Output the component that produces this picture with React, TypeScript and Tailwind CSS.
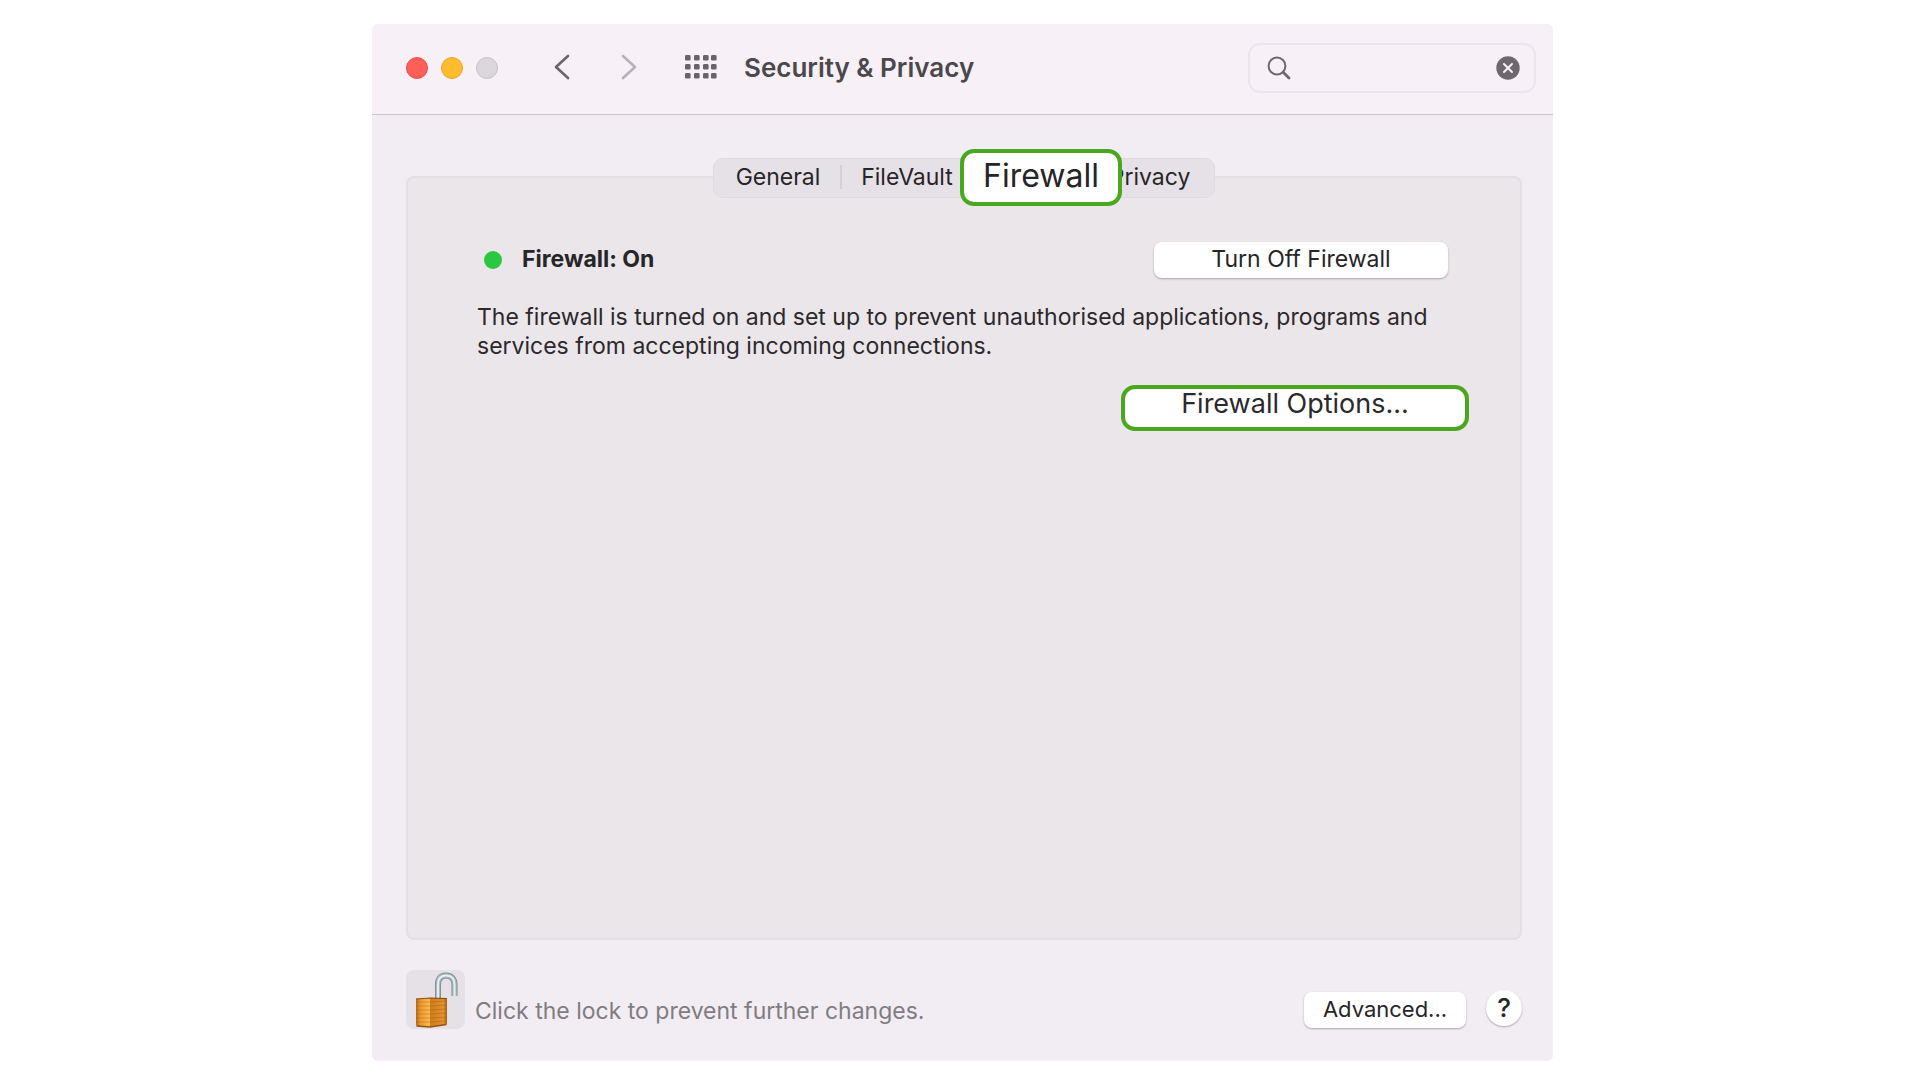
import React from "react";

const pushButton =
  "rounded-lg bg-white pb-0.5 leading-7 text-[#262527] shadow-[0_1px_2px_rgba(0,0,0,0.3)]";

const TitleBar = () => {
  return (
    <header className="flex h-[91px] items-center border-b border-[#cbc5cc] bg-[#f7f0f7] pr-[17px] pb-0.5 pl-[34px]">
      <div className="flex gap-[13px]">
        <button
          aria-label="Close"
          className="size-[22px] rounded-full border border-[#ec5048] bg-[#ff5f57]"
        />
        <button
          aria-label="Minimise"
          className="size-[22px] rounded-full border border-[#e6a823] bg-[#febc2e]"
        />
        <button
          aria-label="Zoom"
          disabled
          className="size-[22px] rounded-full border border-[#c6c0c7] bg-[#dcd6dd]"
        />
      </div>
      <nav className="ml-[54px] flex items-center pb-0.5">
        <button aria-label="Back">
          <svg width="20" height="28" viewBox="0 0 20 28" fill="none">
            <path
              d="M16 3 L4 14 L16 25"
              stroke="#6b646b"
              strokeWidth="2.6"
              strokeLinecap="round"
              strokeLinejoin="round"
            />
          </svg>
        </button>
        <button aria-label="Forward" disabled className="ml-[47px]">
          <svg width="20" height="28" viewBox="0 0 20 28" fill="none">
            <path
              d="M4 3 L16 14 L4 25"
              stroke="#b8b1b9"
              strokeWidth="2.6"
              strokeLinecap="round"
              strokeLinejoin="round"
            />
          </svg>
        </button>
        <button aria-label="Show all" className="ml-[46px]">
          <svg width="32" height="24" viewBox="0 0 32 24" fill="#6b636b">
            {[0, 9, 18].map((y) =>
              [0, 9, 18, 26].map((x) => (
                <rect key={`${x}-${y}`} x={x} y={y} width="5.6" height="5.6" rx="1.4" />
              ))
            )}
          </svg>
        </button>
      </nav>
      <h1 className="ml-[27px] text-[26px] leading-8 font-semibold text-[#4b484c]">
        Security &amp; Privacy
      </h1>
      <div className="ml-auto flex h-[50px] w-[288px] items-center rounded-xl border-2 border-[#ece5ed] pr-[14px] pl-[17px]">
        <svg width="24" height="24" viewBox="0 0 24 24" fill="none" stroke="#6d676e">
          <circle cx="10" cy="10" r="8.4" strokeWidth="2" />
          <path d="M16.2 16.2 L22 22" strokeWidth="2.8" strokeLinecap="round" />
        </svg>
        <input
          type="text"
          aria-label="Search"
          className="min-w-0 flex-1 bg-transparent px-2 text-[23px] outline-none"
        />
        <button aria-label="Clear search">
          <svg width="24" height="24" viewBox="0 0 24 24">
            <circle cx="12" cy="12" r="11.7" fill="#6d686e" />
            <path
              d="M8 8 L16 16 M16 8 L8 16"
              stroke="#f7f0f7"
              strokeWidth="2"
              strokeLinecap="round"
            />
          </svg>
        </button>
      </div>
    </header>
  );
};

const Tabs = () => {
  return (
    <div
      role="tablist"
      className="mx-auto -mt-5 flex h-10 w-[502px] items-center rounded-[10px] border border-[#dfd9e0] bg-[#e6e1e7] pb-0.5 text-[23px] text-[#262527]"
    >
      <button role="tab" aria-selected="false" className="w-32 border-r-2 border-[#d6d0d7] pl-0.5 leading-6">
        General
      </button>
      <button role="tab" aria-selected="false" className="w-[130px] leading-6">
        FileVault
      </button>
      <div className="relative h-full w-[118px]">
        <button
          role="tab"
          aria-selected="true"
          className="absolute -top-[10px] -left-3 z-10 flex h-[57px] w-[162px] justify-center rounded-[14px] border-4 border-[#4aa81f] bg-white pt-1 text-[32px] leading-[38px]"
        >
          Firewall
        </button>
      </div>
      <button role="tab" aria-selected="false" className="flex-1 pr-3 pl-2 leading-6">
        Privacy
      </button>
    </div>
  );
};

const Padlock = () => {
  return (
    <svg width="59" height="59" viewBox="0 0 59 59">
      <defs>
        <linearGradient id="brassFront" x1="0" x2="1" y1="0" y2="0">
          <stop offset="0" stopColor="#b5651a" />
          <stop offset="0.3" stopColor="#e9992f" />
          <stop offset="1" stopColor="#f9bd55" />
        </linearGradient>
        <linearGradient id="brassSide" x1="0" x2="1" y1="0" y2="0">
          <stop offset="0" stopColor="#cf7d18" />
          <stop offset="0.8" stopColor="#dd9230" />
          <stop offset="1" stopColor="#a85e12" />
        </linearGradient>
      </defs>
      {[
        ["#77878e", 6],
        ["#a9b8bd", 4.4],
        ["#e6eef0", 2],
      ].map(([color, width]) => (
        <path
          key={color}
          d="M32 30 V14.5 C32 8.5 35 5.5 40 5.5 C45 5.5 48.5 8.5 48.5 14.5 V26"
          fill="none"
          stroke={color}
          strokeWidth={width}
        />
      ))}
      <path d="M10 29 L24 28 V57 L11 56 Q10 56 10 54 Z" fill="url(#brassFront)" />
      <path d="M24 28 L40 28.5 Q41 29 41 30 V53 Q41 54 40 54.5 L24 57 Z" fill="url(#brassSide)" />
      <path d="M10 29 L24 28 L41 28.7" fill="none" stroke="#8d4c10" strokeWidth="1.2" />
      <path d="M10.5 56 L24 57 L40.5 54.5" fill="none" stroke="#96500f" strokeWidth="1.4" />
      {[32, 36, 40, 44, 48, 52].map((y) => (
        <path
          key={y}
          d={`M10 ${y} L24 ${y} L41 ${y - 1}`}
          fill="none"
          stroke="#a85d10"
          strokeOpacity="0.4"
          strokeWidth="1.2"
        />
      ))}
    </svg>
  );
};

const FirewallPanel = () => {
  return (
    <section className="min-h-[764px] rounded-lg border-2 border-[#e4dee5] bg-[#ebe6ea]">
      <Tabs />
      <div className="pt-11 pr-[51px] pl-[69px]">
        <div className="flex items-center pr-[21px]">
          <span className="ml-[7px] size-[18px] rounded-full bg-[#29c840]" />
          <h2 className="ml-5 pb-0.5 text-[23px] leading-7 font-bold text-[#262527]">
            Firewall: On
          </h2>
          <button className={`${pushButton} ml-auto h-9 w-[294px] text-[23px]`}>
            Turn Off Firewall
          </button>
        </div>
        <p className="mt-[25px] max-w-[970px] text-[23px] leading-[29px] text-[#2b292c]">
          The firewall is turned on and set up to prevent unauthorised applications, programs and
          services from accepting incoming connections.
        </p>
        <div className="mt-6 flex justify-end">
          <button className="flex h-[46px] w-[348px] justify-center rounded-[14px] border-4 border-[#4aa81f] bg-white text-[27px] leading-[30px] text-[#2b292c]">
            Firewall Options...
          </button>
        </div>
      </div>
    </section>
  );
};

const Footer = () => {
  return (
    <footer className="mt-[30px] flex items-center">
      <button
        id="lock"
        aria-label="Lock settings"
        className="size-[59px] rounded-lg bg-[#e6e1e7]"
      >
        <Padlock />
      </button>
      <label htmlFor="lock" className="mt-[22px] ml-[10px] text-[23px] leading-7 text-[#807c81]">
        Click the lock to prevent further changes.
      </label>
      <button className={`${pushButton} mt-5 ml-auto h-9 w-[162px] text-[22px]`}>Advanced...</button>
      <button
        aria-label="Help"
        className="mt-4 ml-5 size-9 rounded-full bg-white text-[26px] leading-8 font-medium text-[#262527] shadow-[0_1px_2px_rgba(0,0,0,0.3)]"
      >
        ?
      </button>
    </footer>
  );
};

export default function App() {
  return (
    <div className="min-h-screen bg-white pt-6 pb-5 pl-[5px] font-['Inter','Liberation_Sans',sans-serif]">
      <main className="mx-auto w-full max-w-[1181px] overflow-hidden rounded-md bg-[#f2edf3]">
        <TitleBar />
        <div className="pt-[61px] pr-[31px] pb-8 pl-[34px]">
          <FirewallPanel />
          <Footer />
        </div>
      </main>
    </div>
  );
}
